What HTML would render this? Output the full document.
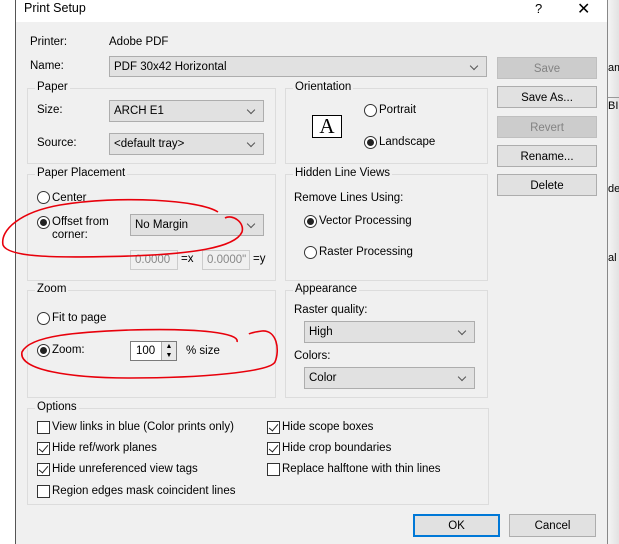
<!DOCTYPE html>
<html><head><style>
*{box-sizing:border-box;margin:0;padding:0}
body{width:619px;height:544px;overflow:hidden;background:#f0f0f0;font-family:"Liberation Sans",sans-serif;font-size:11.5px;color:#000;position:relative}
.a{position:absolute;white-space:nowrap}
.grp{position:absolute;border:1px solid #dcdcdc}
.grp>span{position:absolute;top:-8px;left:7px;background:#f0f0f0;padding:0 2px}
.sel{position:absolute;background:#e1e1e1;border:1px solid #adadad;padding:4px 4px 0;height:22px}
.sel:after{content:"";position:absolute;right:9px;top:6px;width:5px;height:5px;border-right:1px solid #555;border-bottom:1px solid #555;transform:rotate(45deg)}
.btn{position:absolute;background:#e1e1e1;border:1px solid #adadad;text-align:center;line-height:22px;height:22px}
.dis{background:#cccccc;border-color:#bfbfbf;color:#838383}
.rad{position:absolute;width:13px;height:13px;border:1px solid #333;border-radius:50%;background:#fff}
.rad.on:after{content:"";position:absolute;left:2px;top:2px;width:7px;height:7px;border-radius:50%;background:#222}
.chk{position:absolute;width:13px;height:13px;border:1px solid #333;background:#fff}
.chk.on:after{content:"";position:absolute;left:3px;top:0px;width:4px;height:8px;border-right:1.5px solid #222;border-bottom:1.5px solid #222;transform:rotate(40deg)}
.inp{position:absolute;background:#f0f0f0;border:1px solid #ccc;color:#888;padding:3px 4px 0;height:20px}
</style></head><body>
<div class="a" style="left:0;top:0;width:15px;height:544px;background:#fff"></div>
<div class="a" style="left:15px;top:0;width:1px;height:544px;background:#555"></div>
<div class="a" style="left:16px;top:0;width:591px;height:22px;background:#fff"></div>
<div class="a" style="left:24px;top:1px;font-size:12.5px">Print Setup</div>
<div class="a" style="left:535px;top:1px;font-size:13px">?</div>
<div class="a" style="left:577px;top:-1px;font-size:16px">✕</div>
<div class="a" style="left:607px;top:0;width:1px;height:544px;background:#888"></div>
<div class="a" style="left:608px;top:0;width:11px;height:544px;background:linear-gradient(90deg,#f4f4f4,#e2e2e2)"></div>
<div class="a" style="left:608px;top:97px;width:11px;height:1px;background:#999"></div>
<div class="a" style="left:608px;top:62px;font-size:11px">am</div>
<div class="a" style="left:608px;top:100px;font-size:11px">BII</div>
<div class="a" style="left:608px;top:183px;font-size:11px">der</div>
<div class="a" style="left:608px;top:252px;font-size:11px">al</div>

<div class="a" style="left:30px;top:36px">Printer:</div>
<div class="a" style="left:109px;top:36px">Adobe PDF</div>
<div class="a" style="left:30px;top:60px">Name:</div>
<div class="sel" style="left:109px;top:56px;width:378px;height:21px">PDF 30x42 Horizontal</div>

<div class="grp" style="left:27px;top:88px;width:249px;height:76px"><span>Paper</span></div>
<div class="a" style="left:37px;top:104px">Size:</div>
<div class="sel" style="left:109px;top:100px;width:155px">ARCH E1</div>
<div class="a" style="left:37px;top:137px">Source:</div>
<div class="sel" style="left:109px;top:133px;width:155px">&lt;default tray&gt;</div>

<div class="grp" style="left:27px;top:174px;width:249px;height:107px"><span>Paper Placement</span></div>
<div class="rad" style="left:37px;top:191px"></div><div class="a" style="left:52px;top:192px">Center</div>
<div class="rad on" style="left:37px;top:216px"></div><div class="a" style="left:52px;top:216px;line-height:13px">Offset from<br>corner:</div>
<div class="sel" style="left:130px;top:214px;width:134px">No Margin</div>
<div class="inp" style="left:130px;top:250px;width:48px">0.0000</div><div class="a" style="left:181px;top:253px">=x</div>
<div class="inp" style="left:202px;top:250px;width:48px">0.0000"</div><div class="a" style="left:253px;top:253px">=y</div>

<div class="grp" style="left:285px;top:88px;width:203px;height:76px"><span>Orientation</span></div>
<div class="a" style="left:312px;top:115px;width:30px;height:23px;background:#fff;border:1px solid #000;font-family:'Liberation Serif',serif;font-size:21px;text-align:center;line-height:21px">A</div>
<div class="rad" style="left:364px;top:104px"></div><div class="a" style="left:379px;top:104px">Portrait</div>
<div class="rad on" style="left:364px;top:136px"></div><div class="a" style="left:379px;top:136px">Landscape</div>

<div class="grp" style="left:285px;top:174px;width:203px;height:107px"><span>Hidden Line Views</span></div>
<div class="a" style="left:294px;top:192px">Remove Lines Using:</div>
<div class="rad on" style="left:304px;top:215px"></div><div class="a" style="left:319px;top:215px">Vector Processing</div>
<div class="rad" style="left:304px;top:246px"></div><div class="a" style="left:319px;top:246px">Raster Processing</div>

<div class="btn dis" style="left:497px;top:57px;width:100px">Save</div>
<div class="btn" style="left:497px;top:86px;width:100px">Save As...</div>
<div class="btn dis" style="left:497px;top:116px;width:100px">Revert</div>
<div class="btn" style="left:497px;top:145px;width:100px">Rename...</div>
<div class="btn" style="left:497px;top:174px;width:100px">Delete</div>

<div class="grp" style="left:27px;top:290px;width:249px;height:108px"><span>Zoom</span></div>
<div class="rad" style="left:37px;top:312px"></div><div class="a" style="left:52px;top:312px">Fit to page</div>
<div class="rad on" style="left:37px;top:344px"></div><div class="a" style="left:52px;top:344px">Zoom:</div>
<div class="a" style="left:130px;top:341px;width:47px;height:20px;background:#fff;border:1px solid #7a7a7a;padding:3px 5px 0">100</div>
<div class="a" style="left:161px;top:342px;width:15px;height:18px;background:#e8e8e8;border-left:1px solid #aaa;font-size:7px;line-height:9px;text-align:center">▲<br>▼</div>
<div class="a" style="left:186px;top:345px">% size</div>

<div class="grp" style="left:285px;top:290px;width:203px;height:108px"><span>Appearance</span></div>
<div class="a" style="left:294px;top:304px">Raster quality:</div>
<div class="sel" style="left:304px;top:321px;width:171px">High</div>
<div class="a" style="left:294px;top:350px">Colors:</div>
<div class="sel" style="left:304px;top:367px;width:171px">Color</div>

<div class="grp" style="left:27px;top:408px;width:462px;height:97px"><span>Options</span></div>
<div class="chk" style="left:37px;top:421px"></div><div class="a" style="left:52px;top:421px">View links in blue (Color prints only)</div>
<div class="chk on" style="left:37px;top:442px"></div><div class="a" style="left:52px;top:442px">Hide ref/work planes</div>
<div class="chk on" style="left:37px;top:463px"></div><div class="a" style="left:52px;top:463px">Hide unreferenced view tags</div>
<div class="chk" style="left:37px;top:485px"></div><div class="a" style="left:52px;top:485px">Region edges mask coincident lines</div>
<div class="chk on" style="left:267px;top:421px"></div><div class="a" style="left:282px;top:421px">Hide scope boxes</div>
<div class="chk on" style="left:267px;top:442px"></div><div class="a" style="left:282px;top:442px">Hide crop boundaries</div>
<div class="chk" style="left:267px;top:463px"></div><div class="a" style="left:282px;top:463px">Replace halftone with thin lines</div>

<div class="btn" style="left:413px;top:514px;width:87px;height:23px;border:2px solid #0078d7;line-height:20px">OK</div>
<div class="btn" style="left:509px;top:514px;width:87px;height:23px">Cancel</div>

<svg class="a" style="left:0;top:0" width="619" height="544" fill="none" stroke="#e8000b" stroke-width="1.6">
<path d="M218,212 C200,200 120,195 60,205 C20,212 0,230 3,245 C8,258 60,258 130,256 C190,254 235,248 242,232 C245,222 232,214 225,218"/>
<path d="M237,342 C240,333 200,328 130,330 C80,332 30,335 22,352 C18,370 70,378 130,378 C200,378 270,372 275,362 C280,350 277,330 262,331 C255,332 250,333 249,334"/>
</svg>
</body></html>
